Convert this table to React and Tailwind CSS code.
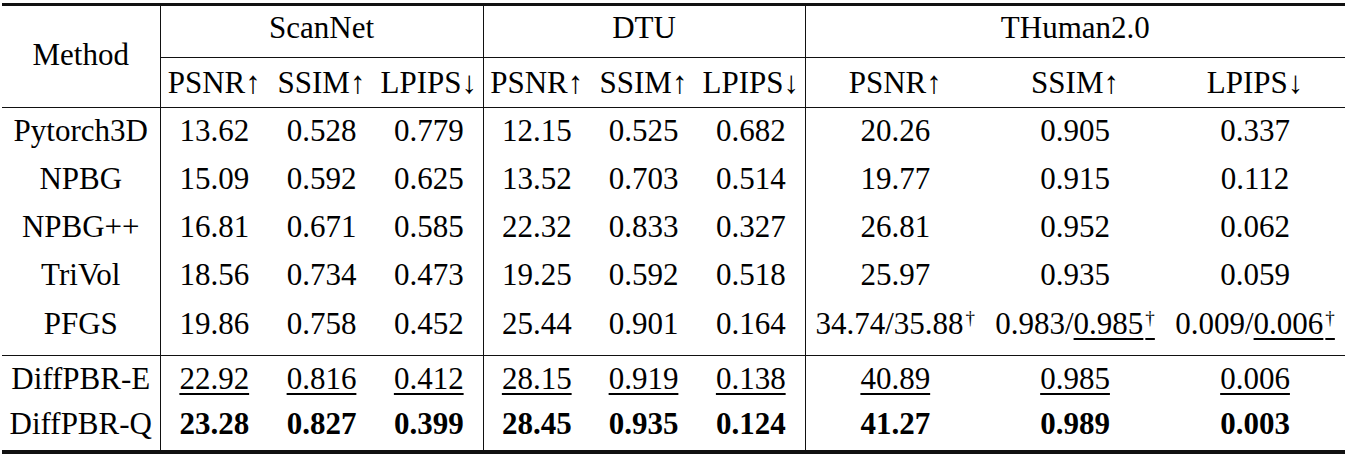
import React from "react";

const Dag = () => (
  <sup className="text-[19px] relative top-[-10px] align-baseline ml-[2px]">†</sup>
);

const U = ({ children }) => (
  <span className="underline decoration-[1.5px] underline-offset-[4px]">{children}</span>
);

const rows = [
  ["Pytorch3D", "13.62", "0.528", "0.779", "12.15", "0.525", "0.682", "20.26", "0.905", "0.337"],
  ["NPBG", "15.09", "0.592", "0.625", "13.52", "0.703", "0.514", "19.77", "0.915", "0.112"],
  ["NPBG++", "16.81", "0.671", "0.585", "22.32", "0.833", "0.327", "26.81", "0.952", "0.062"],
  ["TriVol", "18.56", "0.734", "0.473", "19.25", "0.592", "0.518", "25.97", "0.935", "0.059"],
];

const grpL = [false, true, false, false, true, false, false, true, false, false];

export default function App() {
  const cell = (v, i, extra = "") => (
    <td
      key={i}
      className={
        "text-center align-middle p-0 whitespace-nowrap " +
        (i === 0 ? "border-r-[1.5px] border-r-[#111] " : "") +
        (grpL[i] && i > 1 ? "border-l-[1.5px] border-l-[#111] " : "") +
        extra
      }
    >
      {v}
    </td>
  );

  return (
    <div className="bg-white w-[1349px] h-[460px] pt-[3px] pl-[2px] text-black font-['Liberation_Serif','Times_New_Roman',serif]">
      <table className="table-fixed border-collapse text-[31px] leading-none w-[1343px] border-t-[3.5px] border-b-[4px] border-[#111] font-['Liberation_Serif','Times_New_Roman',serif]">
        <colgroup>
          <col className="w-[158px]" />
          <col className="w-[108px]" />
          <col className="w-[107px]" />
          <col className="w-[108px]" />
          <col className="w-[107px]" />
          <col className="w-[107px]" />
          <col className="w-[108px]" />
          <col className="w-[180px]" />
          <col className="w-[180px]" />
          <col className="w-[180px]" />
        </colgroup>
        <thead>
          <tr className="h-[53px]">
            <td rowSpan={2} className="text-center align-middle p-0 pb-[4px] border-r-[1.5px] border-r-[#111] border-b-[1.5px] border-b-[#111]">Method</td>
            <td colSpan={3} className="text-center align-middle p-0 pb-[8px] border-b-[1.5px] border-b-[#111]">ScanNet</td>
            <td colSpan={3} className="text-center align-middle p-0 pb-[8px] border-l-[1.5px] border-l-[#111] border-b-[1.5px] border-b-[#111]">DTU</td>
            <td colSpan={3} className="text-center align-middle p-0 pb-[8px] border-l-[1.5px] border-l-[#111] border-b-[1.5px] border-b-[#111]">THuman2.0</td>
          </tr>
          <tr className="h-[50px] border-b-[1.5px] border-[#111]">
            {["", "PSNR↑", "SSIM↑", "LPIPS↓", "PSNR↑", "SSIM↑", "LPIPS↓", "PSNR↑", "SSIM↑", "LPIPS↓"].map((v, i) =>
              i === 0 ? null : cell(v, i)
            )}
          </tr>
        </thead>
        <tbody>
          {rows.map((r, ri) => (
            <tr key={ri} className="h-[48px]">
              {r.map((v, i) => cell(v, i, "pb-[3px]"))}
            </tr>
          ))}
          <tr className="h-[56px] border-b-[1.5px] border-[#111]">
            {cell("PFGS", 0, "pb-[8px]")}
            {cell("19.86", 1, "pb-[8px]")}
            {cell("0.758", 2, "pb-[8px]")}
            {cell("0.452", 3, "pb-[8px]")}
            {cell("25.44", 4, "pb-[8px]")}
            {cell("0.901", 5, "pb-[8px]")}
            {cell("0.164", 6, "pb-[8px]")}
            {cell(<span>34.74/35.88<Dag /></span>, 7, "pb-[8px]")}
            {cell(<span>0.983/<U>0.985<Dag /></U></span>, 8, "pb-[8px]")}
            {cell(<span>0.009/<U>0.006<Dag /></U></span>, 9, "pb-[8px]")}
          </tr>
          <tr className="h-[48px]">
            {cell("DiffPBR-E", 0, "pb-[2px]")}
            {["22.92", "0.816", "0.412", "28.15", "0.919", "0.138", "40.89", "0.985", "0.006"].map((v, k) =>
              cell(<U>{v}</U>, k + 1, "pb-[2px]")
            )}
          </tr>
          <tr className="h-[48px]">
            {cell("DiffPBR-Q", 0, "pb-[6px]")}
            {["23.28", "0.827", "0.399", "28.45", "0.935", "0.124", "41.27", "0.989", "0.003"].map((v, k) =>
              cell(<span className="font-bold">{v}</span>, k + 1, "pb-[6px]")
            )}
          </tr>
        </tbody>
      </table>
    </div>
  );
}
